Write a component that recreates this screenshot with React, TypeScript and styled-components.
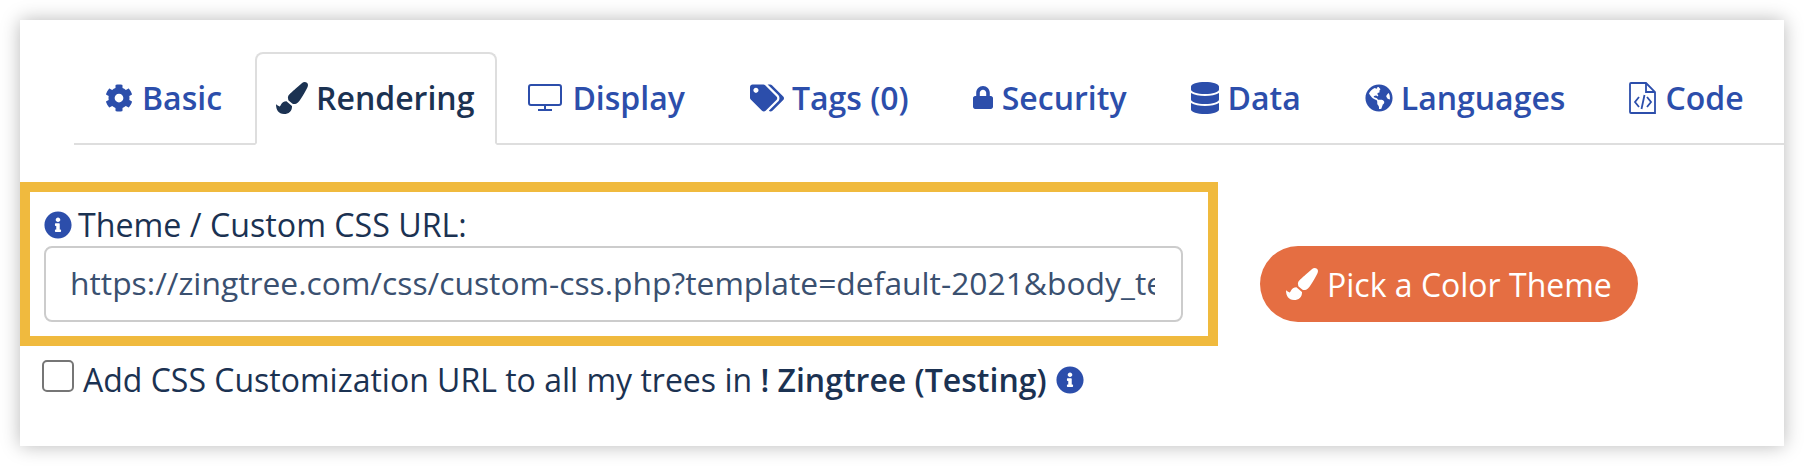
import { createGlobalStyle } from "styled-components";
import styled from "styled-components";
import { ReactElement } from "react";
import {
    FaCog,
    FaDatabase,
    FaGlobeAmericas,
    FaInfoCircle,
    FaLock,
    FaPaintBrush,
    FaTags,
} from "react-icons/fa";

const GlobalStyle = createGlobalStyle`
    html, body {
        margin: 0;
        padding: 0;
        background: #ffffff;
    }

    body {
        font-family: "Open Sans", "Noto Sans", sans-serif;
    }
`;

const Page = styled.div`
    width: 1804px;
    height: 466px;
    padding: 20px;
    box-sizing: border-box;
`;

const Card = styled.div`
    height: 426px;
    padding-top: 32px;
    box-sizing: border-box;
    background: #ffffff;
    box-shadow: 0 0 18px rgba(0, 0, 0, 0.28);
`;

const TabBar = styled.div`
    display: flex;
    align-items: flex-end;
    height: 91px;
    margin-left: 54px;
    padding-left: 10px;
    border-bottom: 2px solid #dedede;
`;

const Tab = styled.div<{ $active?: boolean; $gap: number; $iconGap: number }>`
    display: flex;
    flex: none;
    align-items: center;
    gap: ${(p) => p.$iconGap}px;
    height: 93px;
    margin-bottom: -2px;
    margin-right: ${(p) => p.$gap}px;
    padding: 0 21px 2px 19px;
    box-sizing: border-box;
    font-size: 32px;
    font-weight: 600;
    white-space: nowrap;
    color: ${(p) => (p.$active ? "#1b3252" : "#2c4eab")};
    background: ${(p) => (p.$active ? "#ffffff" : "transparent")};
    border: 2px solid ${(p) => (p.$active ? "#dedede" : "transparent")};
    border-bottom-color: ${(p) => (p.$active ? "#ffffff" : "transparent")};
    border-radius: 8px 8px 0 0;
`;

const TabIcon = styled.span<{ $w: number; $h: number }>`
    display: flex;
    flex: none;

    svg {
        display: block;
        width: ${(p) => p.$w}px;
        height: ${(p) => p.$h}px;
    }
`;

const FormRow = styled.div`
    display: flex;
    align-items: flex-end;
    margin-top: 37px;
`;

const Highlight = styled.div`
    width: 1198px;
    height: 164px;
    padding: 11px 25px 0 14px;
    box-sizing: border-box;
    border: 10px solid #f0ba3e;
`;

const FieldLabel = styled.div`
    display: flex;
    align-items: center;
    gap: 6px;
    height: 43px;
    font-size: 32.2px;
    color: #1b3252;
`;

const InfoIcon = styled(FaInfoCircle)`
    flex: none;
    width: 28px;
    height: 28px;
    color: #2c4eab;
`;

const UrlInput = styled.input`
    display: block;
    width: 100%;
    height: 76px;
    padding: 0 26px 3px 24px;
    box-sizing: border-box;
    font-family: inherit;
    font-size: 31.8px;
    color: #3a5070;
    background: #ffffff;
    border: 2px solid #cccccc;
    border-radius: 8px;
    outline: none;
`;

const ThemeButton = styled.button`
    display: flex;
    align-items: center;
    gap: 9px;
    height: 76px;
    margin: 0 0 24px 42px;
    padding: 0 26px;
    font-family: inherit;
    font-size: 32px;
    color: #ffffff;
    background: #e56e42;
    border: none;
    border-radius: 38px;

    svg {
        width: 32px;
        height: 32px;
    }
`;

const CheckRow = styled.label`
    display: flex;
    align-items: center;
    gap: 9px;
    margin: 12px 0 0 22px;
    font-size: 32px;
    color: #1b3252;

    strong {
        font-weight: 600;
    }
`;

const CheckText = styled.span`
    display: flex;
    align-items: center;
    gap: 9px;
    white-space: pre;
`;

const Checkbox = styled.input`
    appearance: none;
    flex: none;
    width: 32px;
    height: 32px;
    margin: 0 0 8px;
    background: #ffffff;
    border: 2px solid #767676;
    border-radius: 5px;
`;

const DesktopIcon = () => (
    <svg viewBox="0 0 34 27" fill="none" stroke="currentColor" strokeWidth="2">
        <rect x="1" y="1" width="32" height="20" rx="2" />
        <path d="M17 21v4M10 26h14" />
    </svg>
);

const FileCodeIcon = () => (
    <svg viewBox="0 0 27 32" fill="none" stroke="currentColor" strokeWidth="1.8">
        <path d="M2 1h15l9 9v21H2a1 1 0 0 1-1-1V2a1 1 0 0 1 1-1z" />
        <path d="M17 1v9h9" />
        <path d="M10 15l-4 5 4 5M18 15l4 5-4 5M15.5 13l-3 14" />
    </svg>
);

type TabItem = {
    label: string;
    icon: ReactElement;
    w: number;
    h: number;
    active?: boolean;
    gap: number;
    iconGap: number;
};

const tabs: TabItem[] = [
    { label: "Basic", icon: <FaCog />, w: 28, h: 28, gap: 10, iconGap: 9 },
    { label: "Rendering", icon: <FaPaintBrush />, w: 32, h: 32, active: true, gap: 10, iconGap: 8 },
    { label: "Display", icon: <DesktopIcon />, w: 34, h: 27, gap: 21, iconGap: 10 },
    { label: "Tags (0)", icon: <FaTags />, w: 34, h: 28, gap: 20, iconGap: 8 },
    { label: "Security", icon: <FaLock />, w: 20, h: 25, gap: 20, iconGap: 9 },
    { label: "Data", icon: <FaDatabase />, w: 28, h: 32, gap: 20, iconGap: 9 },
    { label: "Languages", icon: <FaGlobeAmericas />, w: 28, h: 28, gap: 20, iconGap: 8 },
    { label: "Code", icon: <FileCodeIcon />, w: 27, h: 32, gap: 20, iconGap: 9 },
];

export default function App() {
    return (
        <Page>
            <GlobalStyle />
            <Card>
                <TabBar>
                    {tabs.map((tab) => (
                        <Tab key={tab.label} $active={tab.active} $gap={tab.gap} $iconGap={tab.iconGap}>
                            <TabIcon $w={tab.w} $h={tab.h}>{tab.icon}</TabIcon>
                            {tab.label}
                        </Tab>
                    ))}
                </TabBar>
                <FormRow>
                    <Highlight>
                        <FieldLabel>
                            <InfoIcon />
                            Theme / Custom CSS URL:
                        </FieldLabel>
                        <UrlInput
                            readOnly
                            value="https://zingtree.com/css/custom-css.php?template=default-2021&body_text_color=1b3252"
                        />
                    </Highlight>
                    <ThemeButton>
                        <FaPaintBrush />
                        Pick a Color Theme
                    </ThemeButton>
                </FormRow>
                <CheckRow>
                    <Checkbox type="checkbox" />
                    <CheckText>
                        <span>
                            Add CSS Customization URL to all my trees in <strong>! Zingtree (Testing)</strong>
                        </span>
                        <InfoIcon />
                    </CheckText>
                </CheckRow>
            </Card>
        </Page>
    );
}
